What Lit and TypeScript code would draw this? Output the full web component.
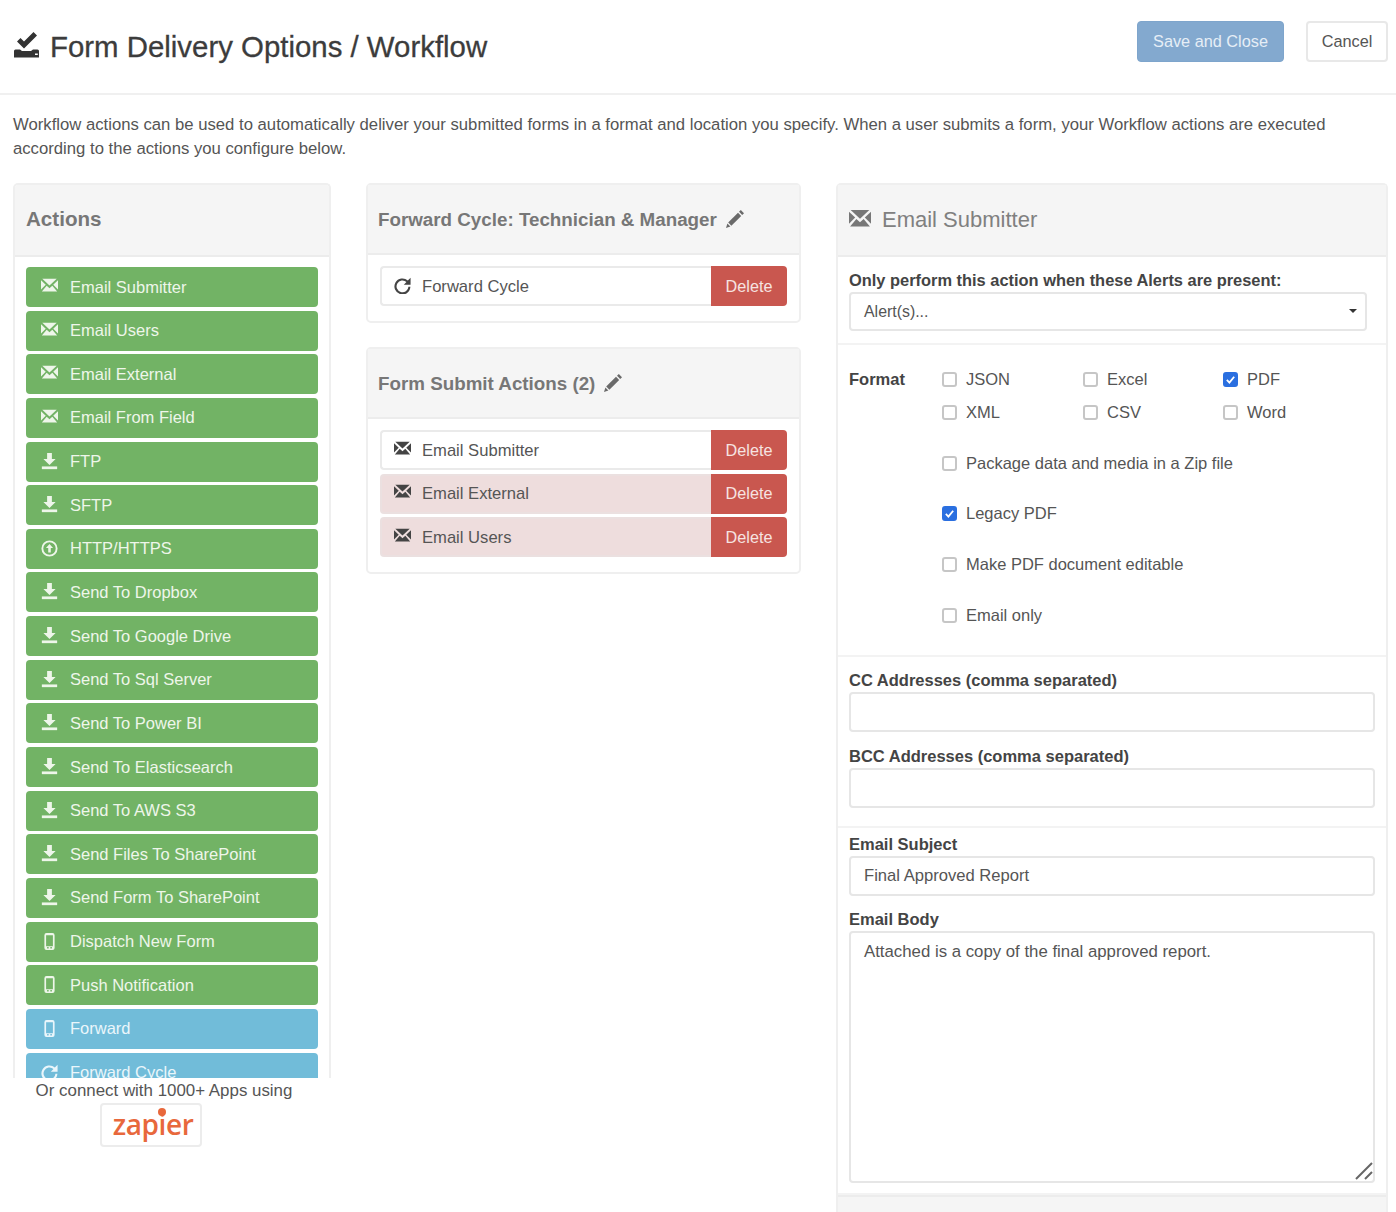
import { LitElement, html, css, svg } from "lit";
import { customElement } from "lit/decorators.js";

const icons: Record<string, any> = {
  mail: svg`<path d="M1.500 1h17L10 8.800z"/><path d="M0 2.600l5.600 5.200L0 13.400z"/><path d="M20 2.600l-5.600 5.200 5.600 5.600z"/><path d="M1 16l5.700-6.800L10 12l3.300-2.800L19 16z"/>`,
  save: svg`<path d="M7.200 0h5.600v7h4.400L10 14 2.800 7h4.400z"/><path d="M1 15.800h18V19H1z"/>`,
  up: svg`<path fill-rule="evenodd" d="M10 .5a9.500 9.500 0 1 1 0 19 9.500 9.500 0 0 1 0-19zm0 2.200a7.300 7.300 0 1 0 0 14.600 7.300 7.300 0 0 0 0-14.600z"/><path d="M10 4.800l4.200 4.600h-2.700v5.200h-3V9.400H5.800z"/>`,
  phone: svg`<path fill-rule="evenodd" d="M6.500 0h7A2.500 2.500 0 0 1 16 2.500v15a2.500 2.500 0 0 1-2.500 2.500h-7A2.500 2.500 0 0 1 4 17.500v-15A2.500 2.500 0 0 1 6.500 0zM6 2.500V15.500h8V2.500zM7.200 16.500v1.800h1.800v-1.800zM11 16.500v1.800h1.800v-1.800z"/>`,
  cycle: svg`<path d="M19.500 1v8h-8l3.200-3.200A7 7 0 1 0 17 11.500h2.300A9.400 9.400 0 1 1 16.300 4.200z"/>`,
  pencil: svg`<path d="M15.800 1l3.200 3.200-1.800 1.800L14 2.800z"/><path d="M13 3.800l3.200 3.200L6.400 16.800l-3.200-3.200z"/><path d="M2.400 14.600l3 3L1 19z"/>`,
};

const icon = (n: string, cls = "ic") =>
  html`<svg class=${cls} viewBox="0 0 20 20" aria-hidden="true">${icons[n]}</svg>`;

const actions: [string, string, string][] = [
  ["mail", "Email Submitter", "g"],
  ["mail", "Email Users", "g"],
  ["mail", "Email External", "g"],
  ["mail", "Email From Field", "g"],
  ["save", "FTP", "g"],
  ["save", "SFTP", "g"],
  ["up", "HTTP/HTTPS", "g"],
  ["save", "Send To Dropbox", "g"],
  ["save", "Send To Google Drive", "g"],
  ["save", "Send To Sql Server", "g"],
  ["save", "Send To Power BI", "g"],
  ["save", "Send To Elasticsearch", "g"],
  ["save", "Send To AWS S3", "g"],
  ["save", "Send Files To SharePoint", "g"],
  ["save", "Send Form To SharePoint", "g"],
  ["phone", "Dispatch New Form", "g"],
  ["phone", "Push Notification", "g"],
  ["phone", "Forward", "b"],
  ["cycle", "Forward Cycle", "b"],
];

@customElement("app-root")
export class AppRoot extends LitElement {
  static styles = css`
    :host {
      display: block;
      height: 1212px;
      overflow: hidden;
      background: #fff;
      color: #555;
      font-family: "Liberation Sans", Arial, sans-serif;
      font-size: 16.5px;
    }
    * { box-sizing: border-box; }
    .top {
      height: 95px;
      border-bottom: 2px solid #f0f0f0;
      display: flex;
      align-items: flex-start;
      padding: 21px 8px 0 13px;
    }
    .title {
      display: flex;
      align-items: center;
      gap: 10px;
      margin: 0;
      height: 52px;
      font-size: 29.4px;
      font-weight: 400;
      color: #3c3c3c;
      flex: 1;
      -webkit-text-stroke: 0.3px #3c3c3c;
    }
    .title-ic { width: 27px; height: 27px; fill: #333; flex: none; margin-top: -6px; }
    .btn-save {
      width: 147px; height: 41px; margin-right: 22px;
      display: flex; align-items: center; justify-content: center;
      background: #83a9cf; color: #e6eef6; border-radius: 4px; border: 1px solid #7ea5cc;
      font-size: 16.3px;
    }
    .btn-cancel {
      width: 82px; height: 41px;
      display: flex; align-items: center; justify-content: center;
      background: #fff; color: #555; border-radius: 4px; border: 2px solid #e8e8e8;
      font-size: 16.3px;
    }
    .desc { margin: 0; padding: 18px 60px 0 13px; line-height: 24px; height: 88px; font-size: 16.7px; }
    .cols {
      display: grid;
      grid-template-columns: 318px 435px 552px;
      gap: 35px;
      padding-left: 13px;
      align-items: start;
    }
    .panel {
      border: 2px solid #efefef;
      border-radius: 5px;
      background: #fff;
    }
    .head {
      height: 72px;
      background: #f5f5f5;
      border-bottom: 2px solid #ececec;
      display: flex;
      align-items: center;
      gap: 8px;
      padding: 0 0 2px 11px;
      font-weight: 700;
      font-size: 20.6px;
      color: #777;
    }
    .head.sm { height: 70px; font-size: 18.8px; padding: 2px 0 0 10px; }
    .head .pen { width: 20px; height: 20px; fill: #6a6a6a; margin: -3px 0 0 0; }
    .actions { height: 895px; overflow: hidden; border-bottom: 0; border-radius: 5px 5px 0 0; }
    .act-list { padding: 10px 11px; display: flex; flex-direction: column; gap: 3.65px; }
    .act {
      height: 40px; flex: none; border-radius: 4px; color: #eef6ea;
      display: flex; align-items: center;
    }
    .act.g { background: #72b365; }
    .act.b { background: #71bcd9; color: #eaf6fb; }
    .ic { width: 17px; height: 17px; margin: -1px 12px 0 15px; fill: currentColor; flex: none; }
    .below { display: flex; flex-direction: column; }
    .connect { width: 302px; text-align: center; margin-top: 2px; line-height: 22px; font-size: 16.9px; }
    .zap {
      position: relative;
      width: 102px; height: 44px; margin: 1px 0 0 87px;
      border: 2px solid #ececec; border-radius: 4px;
      display: flex; align-items: center; justify-content: center;
      font-family: "Open Sans", sans-serif; font-weight: 600; font-size: 28px; color: #e8683c;
      padding: 0 0 2px 4px; letter-spacing: -0.4px;
    }
    .zap-dot {
      position: absolute; left: 56px; top: 3px; width: 8px; height: 8px;
      border-radius: 50%; background: #e8683c;
    }
    .mid { display: flex; flex-direction: column; gap: 24px; }
    .rows { padding: 11px 12px 15px; display: flex; flex-direction: column; gap: 3.6px; }
    .row { display: flex; height: 40px; }
    .name {
      flex: 1; display: flex; align-items: center; font-size: 16.6px; padding-top: 1px;
      border: 2px solid #eaeaea; border-right: 0; border-radius: 4px 0 0 4px; background: #fff; color: #555;
    }
    .name .ic { margin: -3px 11px 0 12px; fill: #444; }
    .row.warn .name { background: #eedddd; border-color: #ebe0e0; }
    .del {
      width: 76px; background: #c9574f; color: #f6e3e1; border-radius: 0 4px 4px 0; font-size: 16.2px;
      display: flex; align-items: center; justify-content: center;
    }
    .right { height: 1100px; border-bottom: 0; }
    .right .head { font-weight: 400; font-size: 22px; color: #808080; gap: 11px; padding: 0 0 0 11px; }
    .right .head svg { width: 22px; height: 22px; fill: #777; }
    .sec { padding: 0 11px; border-bottom: 2px solid #f3f3f3; }
    label.l { display: block; font-weight: 700; color: #444; line-height: 20px; }
    .s1 { padding-top: 13px; height: 88px; }
    .s1 label.l { font-size: 16.42px; }
    .select {
      position: relative; margin-top: 2px; width: 518px; height: 39px; border: 2px solid #e6e6e6; border-radius: 4px;
      display: flex; align-items: center; padding-left: 13px; font-size: 15.9px;
    }
    .caret {
      position: absolute; right: 8px; top: 15px; width: 0; height: 0;
      border-left: 4px solid transparent; border-right: 4px solid transparent; border-top: 4px solid #333;
    }
    .s2 {
      height: 312px; display: grid;
      grid-template-columns: 93px 141px 140px 141px;
      grid-template-rows: 33px 33px auto;
      padding-top: 18px;
    }
    .s2 .fmt { font-weight: 700; color: #444; line-height: 33px; height: 33px; }
    .chk { display: flex; align-items: center; gap: 9px; height: 33px; }
    .chk input {
      appearance: none; -webkit-appearance: none;
      width: 15px; height: 15px; margin: 0; flex: none;
      background: #fff; border: 2px solid #c6c6c6; border-radius: 3px;
    }
    .chk input:checked {
      border-color: #2a6fe0;
      background: #2a6fe0 url("data:image/svg+xml,%3Csvg xmlns='http://www.w3.org/2000/svg' viewBox='0 0 12 12'%3E%3Cpath d='M2 6.500l2.800 2.800L10 3' fill='none' stroke='white' stroke-width='2'/%3E%3C/svg%3E") center / 11px no-repeat;
    }
    .spacer { grid-column: 1; }
    .extra { grid-column: 1 / 5; display: flex; flex-direction: column; padding: 9px 0 0 93px; }
    .extra .chk { height: 50.6px; }
    .s3 { height: 171px; padding-top: 13px; }
    .inp {
      display: flex; align-items: center; padding-left: 13px;
      margin-top: 2px; width: 526px; height: 40px; border: 2px solid #e6e6e6; border-radius: 4px; color: #555; font-size: 16.6px;
    }
    .gap { height: 14px; }
    .s4 { padding-top: 6px; height: 367px; }
    .s4 .gap { height: 13px; }
    .ta {
      position: relative;
      margin-top: 2px; width: 526px; height: 252px; border: 2px solid #e6e6e6; border-radius: 4px;
      padding: 8px 13px; line-height: 22px; color: #555; font-size: 16.8px;
    }
    .grip { position: absolute; right: 0; bottom: 1px; width: 18px; height: 18px; stroke: #666; stroke-width: 2; }
    .foot { height: 20px; background: #f5f5f5; border-top: 2px solid #ececec; }
  `;

  private row(ic: string, name: string, warn = false) {
    return html`<div class="row ${warn ? "warn" : ""}">
      <div class="name">${icon(ic)}${name}</div>
      <div class="del">Delete</div>
    </div>`;
  }

  private chk(name: string, checked = false) {
    return html`<label class="chk"><input type="checkbox" .checked=${checked} />${name}</label>`;
  }

  render() {
    return html`
      <div class="top">
        <h1 class="title">${titleIcon()}Form Delivery Options / Workflow</h1>
        <div class="btn-save">Save and Close</div>
        <div class="btn-cancel">Cancel</div>
      </div>
      <p class="desc">
        Workflow actions can be used to automatically deliver your submitted forms in a format and location you specify. When a user submits a form, your Workflow actions are executed according to the actions you configure below.
      </p>
      <div class="cols">
        <div class="below">
          <div class="panel actions">
            <div class="head">Actions</div>
            <div class="act-list">
              ${actions.map(([i, n, c]) => html`<div class="act ${c}">${icon(i)}${n}</div>`)}
            </div>
          </div>
          <div class="connect">Or connect with 1000+ Apps using</div>
          <div class="zap">zapier<span class="zap-dot"></span></div>
        </div>
        <div class="mid">
          <div class="panel">
            <div class="head sm">Forward Cycle: Technician &amp; Manager ${icon("pencil", "pen")}</div>
            <div class="rows">${this.row("cycle", "Forward Cycle")}</div>
          </div>
          <div class="panel">
            <div class="head sm">Form Submit Actions (2) ${icon("pencil", "pen")}</div>
            <div class="rows">
              ${this.row("mail", "Email Submitter")}
              ${this.row("mail", "Email External", true)}
              ${this.row("mail", "Email Users", true)}
            </div>
          </div>
        </div>
        <div class="panel right">
          <div class="head">${icon("mail", "hic")}Email Submitter</div>
          <div class="sec s1">
            <label class="l">Only perform this action when these Alerts are present:</label>
            <div class="select">Alert(s)...<span class="caret"></span></div>
          </div>
          <div class="sec s2">
            <div class="fmt">Format</div>
            ${this.chk("JSON")}${this.chk("Excel")}${this.chk("PDF", true)}
            <div class="spacer"></div>
            ${this.chk("XML")}${this.chk("CSV")}${this.chk("Word")}
            <div class="extra">
              ${this.chk("Package data and media in a Zip file")}
              ${this.chk("Legacy PDF", true)}
              ${this.chk("Make PDF document editable")}
              ${this.chk("Email only")}
            </div>
          </div>
          <div class="sec s3">
            <label class="l">CC Addresses (comma separated)</label>
            <div class="inp"></div>
            <div class="gap"></div>
            <label class="l">BCC Addresses (comma separated)</label>
            <div class="inp"></div>
          </div>
          <div class="sec s4">
            <label class="l">Email Subject</label>
            <div class="inp">Final Approved Report</div>
            <div class="gap"></div>
            <label class="l">Email Body</label>
            <div class="ta">Attached is a copy of the final approved report.
              <svg class="grip" viewBox="0 0 18 18"><path d="M1 17L17 1M10 17l7-7"/></svg>
            </div>
          </div>
          <div class="foot"></div>
        </div>
      </div>
    `;
  }
}

function titleIcon() {
  return html`<svg class="title-ic" viewBox="0 0 27 27" aria-hidden="true"><path d="M20.500 1l3.500 3.500L11 17.500l-7-7 3.500-3.500 3.500 3.500z"/><path fill-rule="evenodd" d="M2.500 18.500H7l2 1.500h9l2-1.500h4.500a1.500 1.500 0 0 1 1.500 1.500v6.500H1V20a1.500 1.500 0 0 1 1.500-1.500zM22 22.500v1.500h2.800v-1.500z"/></svg>`;
}
